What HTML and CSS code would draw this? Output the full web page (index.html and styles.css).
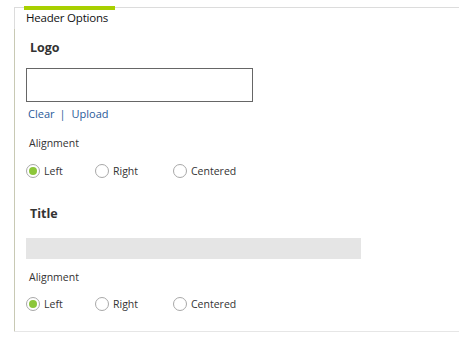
FILE: index.html
```html
<!DOCTYPE html>
<html>
<head>
<meta charset="utf-8">
<link rel="stylesheet" href="styles.css">
</head>
<body>
<div class="panel">
  <div class="tabs">
    <div class="tab">Header Options</div>
  </div>
  <div class="body">
    <div class="section-title">Logo</div>
    <div class="logo-box"></div>
    <div class="links"><a class="link">Clear</a><span class="sep">|</span><a class="link">Upload</a></div>
    <div class="label">Alignment</div>
    <div class="radios">
      <label class="radio checked"><span class="dot"></span>Left</label>
      <label class="radio"><span class="dot"></span>Right</label>
      <label class="radio"><span class="dot"></span>Centered</label>
    </div>
    <div class="section-title title2">Title</div>
    <div class="title-bar"></div>
    <div class="label label2">Alignment</div>
    <div class="radios radios2">
      <label class="radio checked"><span class="dot"></span>Left</label>
      <label class="radio"><span class="dot"></span>Right</label>
      <label class="radio"><span class="dot"></span>Centered</label>
    </div>
  </div>
</div>
</body>
</html>
```
FILE: styles.css
```css
html, body {
  margin: 0;
  padding: 0;
  background: #fff;
}
body {
  font-family: "Open Sans", "Noto Sans", sans-serif;
  color: #333;
}
.panel {
  margin: 7px 0 0 14px;
  height: 323px;
  border-top: 1px solid #dcdcdc;
  border-left: 1px solid #dcdcdc;
  border-bottom: 1px solid #e6e6e6;
  display: flex;
  flex-direction: column;
}
.tabs {
  height: 21px;
  display: flex;
}
.tab {
  margin: -2px 0 0 9px;
  width: 89px;
  border-top: 4px solid #a8d000;
  padding-left: 2px;
  font-size: 11.5px;
  line-height: 15px;
  color: #111;
  letter-spacing: -0.2px;
}
.body {
  flex: 1;
  margin-left: -1px;
  border-left: 1px solid #c8c9b4;
  padding-left: 11px;
}
.section-title {
  font-weight: bold;
  font-size: 12.5px;
  line-height: 16px;
  margin: 11px 0 0 4px;
  color: #333;
}
.logo-box {
  margin-top: 12px;
  width: 225px;
  height: 32px;
  border: 1px solid #666;
}
.links {
  margin: 4px 0 0 2px;
  font-size: 11px;
  line-height: 15px;
}
.link {
  color: #2a5a9a;
}
.sep {
  color: #2a5a9a;
  margin: 0 6px 0 5px;
}
.label {
  margin: 15px 0 0 3px;
  font-size: 10.5px;
  line-height: 15px;
  color: #333;
}
.radios {
  display: flex;
  margin-top: 13px;
  font-size: 10.5px;
  line-height: 14px;
  color: #333;
}
.radios2 {
  margin-top: 12px;
}
.radio {
  display: flex;
  align-items: center;
}
.radio:nth-child(1) { width: 69px; }
.radio:nth-child(2) { width: 78px; }
.dot {
  box-sizing: border-box;
  width: 14px;
  height: 14px;
  border: 1px solid #a8a8a8;
  border-radius: 50%;
  margin-right: 4px;
  display: flex;
  align-items: center;
  justify-content: center;
}
.checked .dot::after {
  content: "";
  width: 8px;
  height: 8px;
  border-radius: 50%;
  background: #8cc63a;
}
.title2 {
  margin-top: 28px;
}
.title-bar {
  margin-top: 16px;
  width: 335px;
  height: 21px;
  background: #e5e5e5;
}
.label2 {
  margin-top: 11px;
}
```
